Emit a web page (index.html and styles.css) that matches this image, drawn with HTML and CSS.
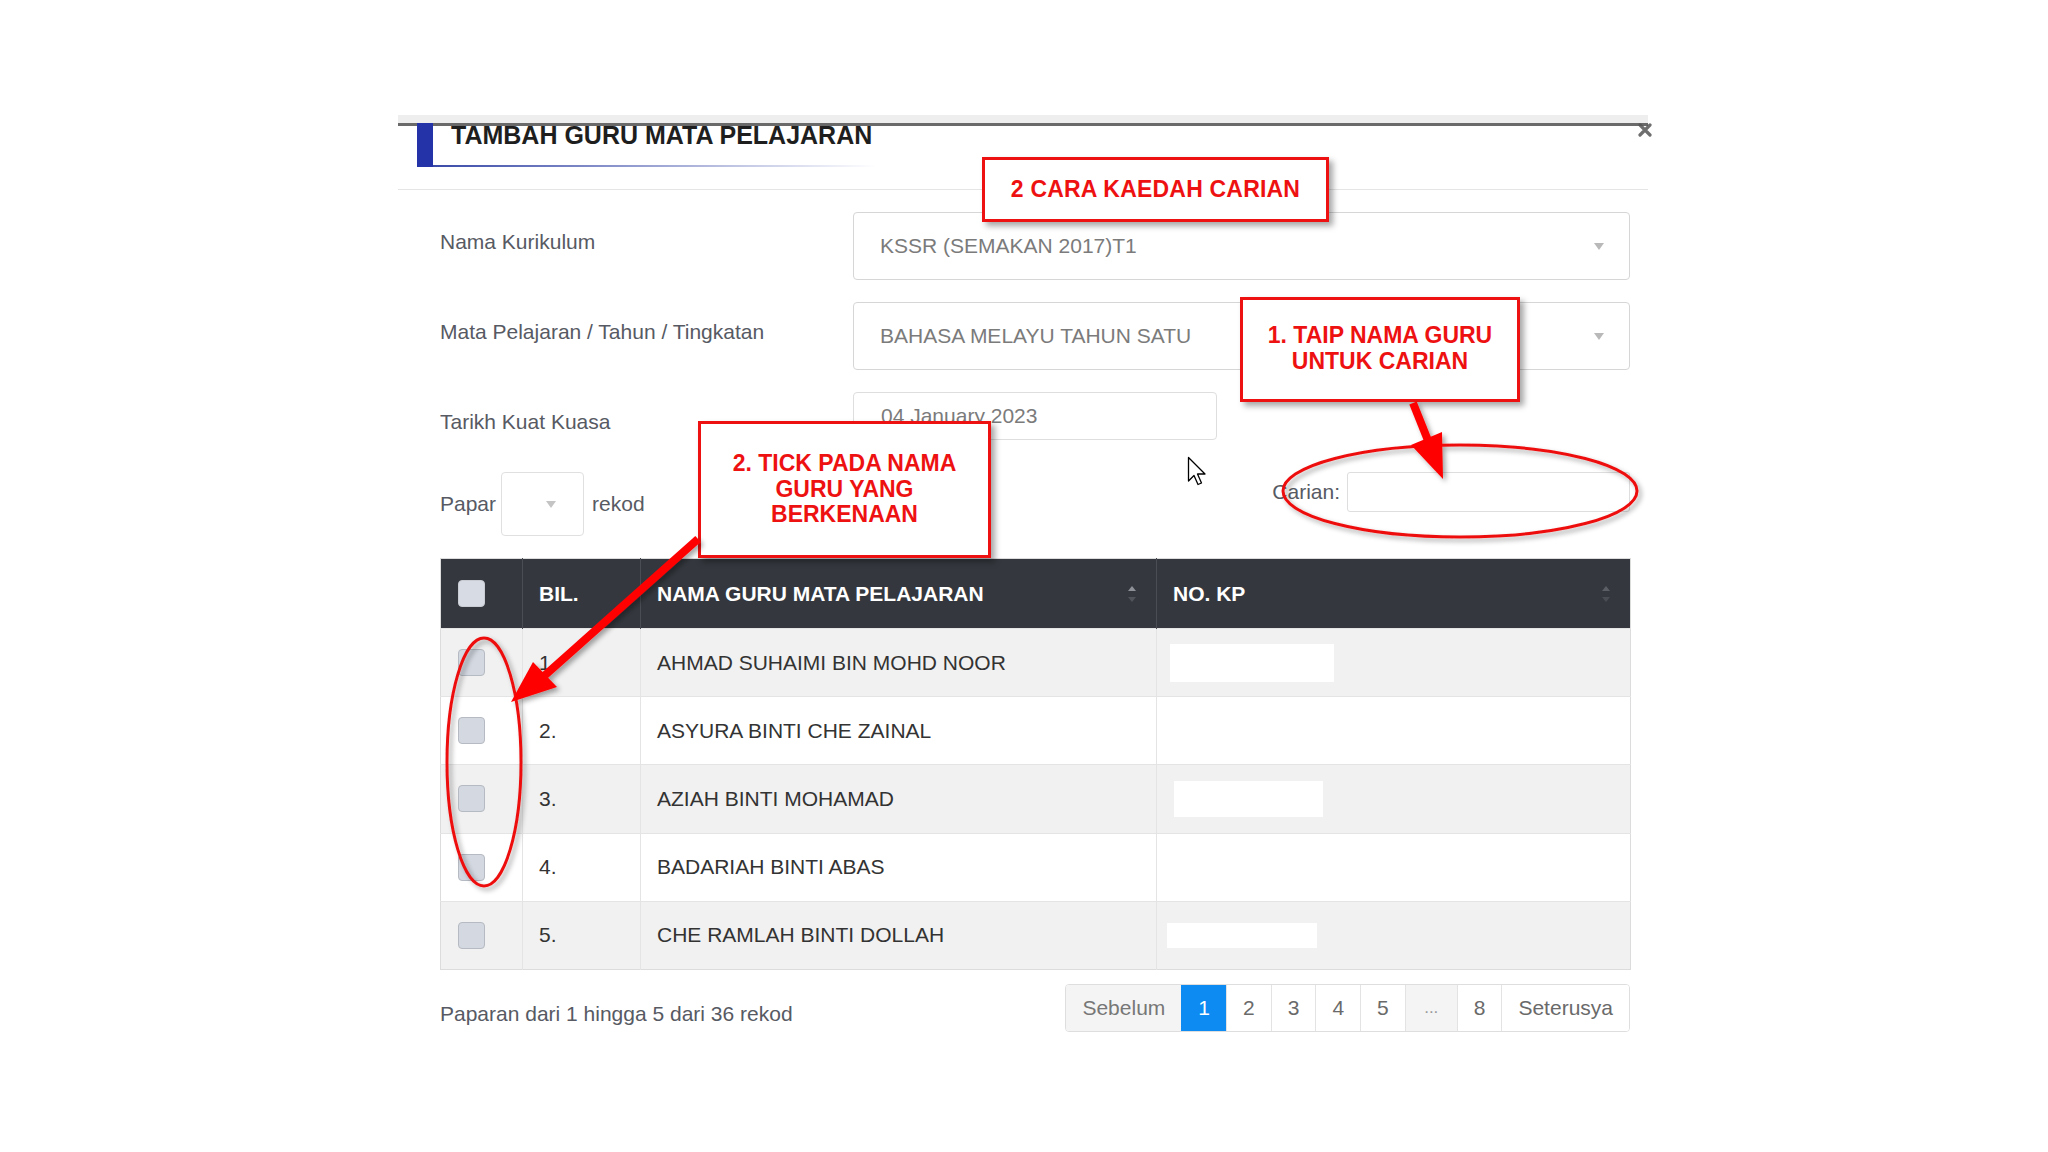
FILE: index.html
```html
<!DOCTYPE html>
<html lang="ms">
<head>
<meta charset="utf-8">
<title>Tambah Guru Mata Pelajaran</title>
<link rel="stylesheet" href="styles.css">
</head>
<body>
<div class="page">
  <div class="modal">
    <div class="modal-top"></div>
    <div class="modal-header">
      <div class="title-block"><h2 class="title">TAMBAH GURU MATA PELAJARAN</h2></div>
      <span class="close"><svg width="14" height="14" viewBox="0 0 14 14"><path d="M2 2 L12 12 M12 2 L2 12" stroke="#555" stroke-width="3.2" stroke-linecap="round"/></svg></span>
    </div>
    <div class="modal-body">
      <div class="form-row">
        <div class="form-label">Nama Kurikulum</div>
        <div class="select select-wide">KSSR (SEMAKAN 2017)T1<span class="caret"></span></div>
      </div>
      <div class="form-row">
        <div class="form-label">Mata Pelajaran / Tahun / Tingkatan</div>
        <div class="select select-wide">BAHASA MELAYU TAHUN SATU<span class="caret"></span></div>
      </div>
      <div class="form-row form-row-date">
        <div class="form-label">Tarikh Kuat Kuasa</div>
        <div class="date-input">04 January 2023</div>
      </div>
      <div class="toolbar">
        <div class="length">
          <span>Papar</span>
          <div class="select select-small"><span class="caret"></span></div>
          <span>rekod</span>
        </div>
        <div class="search">
          <span>Carian:</span>
          <div class="search-input"></div>
        </div>
      </div>
      <table class="grid">
        <colgroup>
          <col class="c-check"><col class="c-bil"><col class="c-nama"><col class="c-kp">
        </colgroup>
        <thead>
          <tr>
            <th><span class="chk chk-head"></span></th>
            <th>BIL.</th>
            <th class="sortable">NAMA GURU MATA PELAJARAN<span class="sort"><i class="up"></i><i class="down"></i></span></th>
            <th class="sortable">NO. KP<span class="sort sort-dim"><i class="up"></i><i class="down"></i></span></th>
          </tr>
        </thead>
        <tbody>
          <tr><td><span class="chk"></span></td><td>1.</td><td>AHMAD SUHAIMI BIN MOHD NOOR</td><td><span class="redact redact-1"></span></td></tr>
          <tr><td><span class="chk"></span></td><td>2.</td><td>ASYURA BINTI CHE ZAINAL</td><td></td></tr>
          <tr><td><span class="chk"></span></td><td>3.</td><td>AZIAH BINTI MOHAMAD</td><td><span class="redact redact-3"></span></td></tr>
          <tr><td><span class="chk"></span></td><td>4.</td><td>BADARIAH BINTI ABAS</td><td></td></tr>
          <tr><td><span class="chk"></span></td><td>5.</td><td>CHE RAMLAH BINTI DOLLAH</td><td><span class="redact redact-5"></span></td></tr>
        </tbody>
      </table>
      <div class="footer">
        <div class="info">Paparan dari 1 hingga 5 dari 36 rekod</div>
        <div class="pager">
          <span class="pg pg-disabled">Sebelum</span>
          <span class="pg pg-active">1</span>
          <span class="pg">2</span>
          <span class="pg">3</span>
          <span class="pg">4</span>
          <span class="pg">5</span>
          <span class="pg pg-disabled pg-dots">...</span>
          <span class="pg">8</span>
          <span class="pg">Seterusya</span>
        </div>
      </div>
    </div>
  </div>

  <div class="note note-cara">2 CARA KAEDAH CARIAN</div>
  <div class="note note-taip">1. TAIP NAMA GURU<br>UNTUK CARIAN</div>
  <div class="note note-tick">2. TICK PADA NAMA<br>GURU YANG<br>BERKENAAN</div>

  <svg class="marks" width="2048" height="1152" viewBox="0 0 2048 1152">
    <defs>
      <filter id="sh" x="-20%" y="-20%" width="140%" height="140%">
        <feDropShadow dx="3" dy="3" stdDeviation="2.5" flood-color="#000" flood-opacity="0.35"/>
      </filter>
    </defs>
    <g filter="url(#sh)">
      <ellipse cx="1460" cy="491" rx="177" ry="46" fill="none" stroke="#ee1111" stroke-width="3"/>
      <ellipse cx="484" cy="762" rx="37" ry="124" fill="none" stroke="#ee1111" stroke-width="3"/>
      <path d="M1413 403 L1431 448" stroke="#f00" stroke-width="8" fill="none"/>
      <path d="M1443 479 L1411 445 L1442 432 Z" fill="#f00"/>
      <path d="M698 539 L543 677" stroke="#f00" stroke-width="8" fill="none"/>
      <path d="M511 702 L533 662 L557 687 Z" fill="#f00"/>
    </g>
  </svg>

  <svg class="cursor" width="22" height="32" viewBox="0 0 22 32">
    <path d="M1.5 1.5 L1.5 25 L7 19.5 L11 28.5 L14.5 27 L10.5 18 L18 18 Z" fill="#fff" stroke="#000" stroke-width="1.3" stroke-linejoin="round"/>
  </svg>
</div>
</body>
</html>
```

FILE: styles.css
```css
* { box-sizing: border-box; }

html, body {
  margin: 0;
  padding: 0;
  background: #ffffff;
}

body {
  font-family: "Liberation Sans", Arial, sans-serif;
  font-size: 21px;
  color: #333;
}

.page {
  position: relative;
  width: 2048px;
  height: 1152px;
  padding-top: 115px;
  padding-left: 398px;
  overflow: hidden;
}

.modal {
  position: relative;
  width: 1250px;
}

.modal-top {
  height: 11px;
  background: #eeeeee;
  border-bottom: 3px solid #6a6a6a;
}

.modal-header {
  position: relative;
  height: 67px;
  border-bottom: 1px solid #e5e5e5;
  padding-left: 19px;
}

.title-block {
  width: 460px;
  height: 44px;
  border-left: 16px solid #2434a8;
  background: linear-gradient(to right, #3a4aa8, rgba(255,255,255,0)) no-repeat left bottom / 100% 2px;
  padding-left: 18px;
}

.title {
  margin: -3px 0 0 0;
  font-size: 25px;
  line-height: 25px;
  font-weight: bold;
  color: #1e1e1e;
  white-space: nowrap;
}

.close {
  position: absolute;
  right: -4px;
  top: 0;
  width: 14px;
  height: 14px;
  line-height: 0;
  opacity: 0.85;
}

.modal-body {
  padding: 22px 18px 0 42px;
}

.form-row {
  display: flex;
  margin-bottom: 22px;
}

.form-row-date {
  margin-bottom: 32px;
}

.form-label {
  width: 413px;
  padding-top: 15px;
  line-height: 30px;
  color: #575a63;
}

.select {
  position: relative;
  display: flex;
  align-items: center;
  border: 1px solid #d6d6d6;
  border-radius: 4px;
  background: #fff;
  color: #7b7b7b;
}

.select-wide {
  width: 777px;
  height: 68px;
  padding-left: 26px;
}

.caret {
  position: absolute;
  top: 50%;
  right: 25px;
  margin-top: -3px;
  width: 0;
  height: 0;
  border-left: 5px solid transparent;
  border-right: 5px solid transparent;
  border-top: 7px solid #b9b9b9;
}

.date-input {
  width: 364px;
  height: 48px;
  display: flex;
  align-items: center;
  padding-left: 27px;
  border: 1px solid #dedede;
  border-radius: 4px;
  color: #7b7b7b;
}

.toolbar {
  display: flex;
  justify-content: space-between;
  align-items: flex-start;
  margin-bottom: 22px;
}

.length {
  display: flex;
  align-items: center;
  height: 64px;
  color: #575a63;
}

.select-small {
  width: 83px;
  height: 64px;
  margin: 0 8px 0 5px;
  border-color: #e0e0e0;
}

.select-small .caret {
  right: 27px;
  border-top-color: #c4c4c4;
}

.search {
  display: flex;
  align-items: center;
  height: 40px;
  color: #575a63;
}

.search-input {
  width: 283px;
  height: 40px;
  margin-left: 7px;
  border: 1px solid #dedede;
  border-radius: 3px;
}

.grid {
  width: 1190px;
  table-layout: fixed;
  border-collapse: collapse;
  border: 1px solid #dcdcdc;
}

.c-check { width: 82px; }
.c-bil { width: 118px; }
.c-nama { width: 516px; }
.c-kp { width: 474px; }

.grid th {
  position: relative;
  height: 70px;
  background: #34383e;
  color: #ffffff;
  font-weight: bold;
  text-align: left;
  padding: 0 0 0 16px;
  border-left: 1px solid #4a4e54;
  vertical-align: middle;
}

.grid th:first-child { border-left: none; }

.grid td {
  height: 68.2px;
  padding: 0 0 0 16px;
  border-left: 1px solid #e4e4e4;
  border-top: 1px solid #e4e4e4;
  vertical-align: middle;
  color: #333;
  white-space: nowrap;
}

.grid td:first-child { border-left: none; }

.grid tbody tr:nth-child(odd) td { background: #f1f1f1; }
.grid tbody tr:nth-child(even) td { background: #ffffff; }

.chk {
  display: block;
  width: 27px;
  height: 27px;
  margin-left: 1px;
  background: #d3d8e1;
  border: 1px solid #b6bac2;
  border-radius: 4px;
}

.chk-head {
  background: #d7dbe3;
  border-color: #c9ccd2;
}

.sort {
  position: absolute;
  right: 19px;
  top: 50%;
  margin-top: -9px;
  width: 9px;
  height: 18px;
}

.sort i {
  position: absolute;
  left: 0;
  width: 0;
  height: 0;
  border-left: 4px solid transparent;
  border-right: 4px solid transparent;
}

.sort .up {
  top: 1px;
  border-bottom: 5px solid #8e9298;
}

.sort .down {
  bottom: 1px;
  border-top: 5px solid #51555b;
}

.sort-dim .up { border-bottom-color: #5b5f65; }
.sort-dim .down { border-top-color: #4a4e54; }

.redact {
  display: block;
  background: #ffffff;
}

.redact-1 { width: 164px; height: 38px; margin-left: -3px; }
.redact-3 { width: 149px; height: 36px; margin-left: 1px; }
.redact-5 { width: 150px; height: 25px; margin-left: -6px; }

.footer {
  display: flex;
  justify-content: space-between;
  align-items: flex-start;
  margin-top: 14px;
}

.info {
  padding-top: 15px;
  line-height: 30px;
  color: #575a63;
}

.pager {
  display: flex;
  height: 48px;
  border: 1px solid #dedede;
  border-radius: 4px;
  overflow: hidden;
}

.pg {
  display: flex;
  align-items: center;
  justify-content: center;
  padding: 0 16px;
  min-width: 44px;
  color: #6a6a6a;
  background: #fff;
  border-left: 1px solid #e3e3e3;
}

.pg:first-child { border-left: none; }

.pg-disabled {
  background: #f4f4f4;
  color: #777;
}

.pg-active {
  background: #0d8bf2;
  color: #fff;
  border-left-color: #0d8bf2;
}

.pg-dots {
  width: 52px;
  color: #999;
  font-size: 17px;
}

.note {
  position: absolute;
  background: #ffffff;
  border: 3px solid #ee1111;
  box-shadow: 4px 4px 6px rgba(0,0,0,0.35);
  color: #ee1111;
  font-weight: bold;
  font-size: 23px;
  letter-spacing: 0;
  text-align: center;
  white-space: nowrap;
}

.note-cara {
  left: 982px;
  top: 157px;
  width: 347px;
  height: 65px;
  line-height: 59px;
  letter-spacing: 0.2px;
}

.note-taip {
  left: 1240px;
  top: 297px;
  width: 280px;
  height: 105px;
  padding-top: 22px;
  line-height: 26px;
}

.note-tick {
  left: 698px;
  top: 421px;
  width: 293px;
  height: 137px;
  padding-top: 27px;
  line-height: 25.5px;
}

.marks {
  position: absolute;
  left: 0;
  top: 0;
  pointer-events: none;
}

.cursor {
  position: absolute;
  left: 1187px;
  top: 456px;
}
```
